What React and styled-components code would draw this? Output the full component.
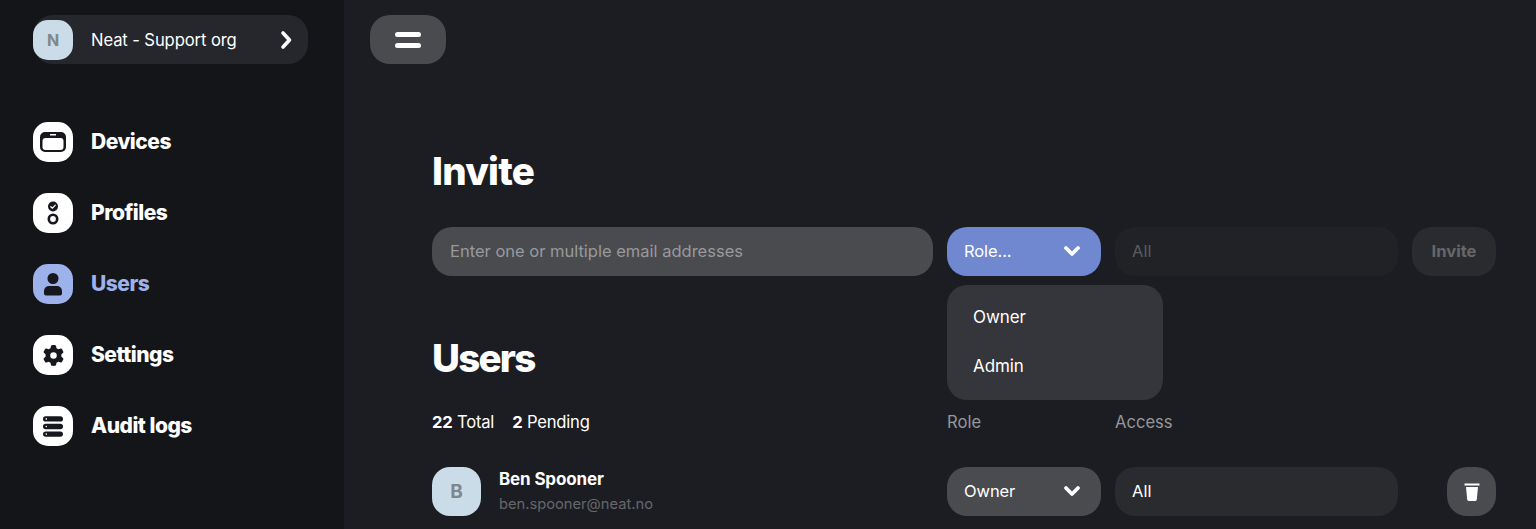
import React from 'react'
import styled, { createGlobalStyle } from 'styled-components'
import { FaGear } from 'react-icons/fa6'

const GlobalStyle = createGlobalStyle`
	html, body {
		margin: 0;
		height: 100%;
		overflow: hidden;
		background: #1c1d22;
		font-family: Inter, "Liberation Sans", sans-serif;
		color: #fff;
	}
	* { box-sizing: border-box; }
`

const Page = styled.div`
	display: flex;
	height: 529px;
	overflow: hidden;
`

const Sidebar = styled.aside`
	width: 344px;
	flex-shrink: 0;
	background: #141519;
	padding: 15px 36px 0 33px;
`

const OrgPill = styled.div`
	display: flex;
	align-items: center;
	width: 275px;
	height: 49px;
	border-radius: 20px;
	background: #26272c;
`

const OrgName = styled.span`
	flex: 1;
	margin-left: 18px;
	font-size: 16.6px;
	letter-spacing: -0.1px;
`

const Avatar = styled.div`
	display: flex;
	align-items: center;
	justify-content: center;
	flex-shrink: 0;
	width: ${p => p.$size}px;
	height: ${p => p.$size}px;
	border-radius: ${p => (p.$size > 40 ? 18 : 15)}px;
	background: #cadce8;
	color: #7f878c;
	font-weight: 700;
	font-size: ${p => (p.$size > 40 ? 19 : 16)}px;
`

const Chevron = styled.svg`
	flex-shrink: 0;
	margin-right: ${p => p.$right || 0}px;
`

const Nav = styled.nav`
	display: flex;
	flex-direction: column;
	gap: 31px;
	margin-top: 58px;
`

const NavItem = styled.a`
	display: flex;
	align-items: center;
	gap: 18px;
	height: 40px;
	font-size: 21px;
	font-weight: 800;
	line-height: 38px;
	letter-spacing: -0.5px;
	color: ${p => (p.$active ? '#9db1ea' : '#fff')};
`

const NavIcon = styled.span`
	display: flex;
	align-items: center;
	justify-content: center;
	width: 40px;
	height: 40px;
	border-radius: 15px;
	background: ${p => (p.$active ? '#9db1ea' : '#fff')};
	color: #17181d;
`

const Main = styled.main`
	flex: 1;
	min-width: 0;
	padding: 15px 40px 0 26px;
`

const MenuButton = styled.button`
	display: flex;
	align-items: center;
	justify-content: center;
	width: 76px;
	height: 49px;
	padding: 0;
	border: 0;
	border-radius: 20px;
	background: #4a4b4f;
`

const Content = styled.div`
	margin-left: 62px;
`

const Title = styled.h1`
	margin: 0;
	font-size: 38.5px;
	line-height: 48px;
	font-weight: 800;
`

const InviteTitle = styled(Title)`
	margin-top: 83px;
	letter-spacing: -0.8px;
`

const UsersTitle = styled(Title)`
	margin-top: 58px;
	letter-spacing: -1.8px;
`

const Row = styled.div`
	display: flex;
	align-items: center;
	gap: 14px;
`

const InviteRow = styled(Row)`
	position: relative;
	margin-top: 32px;
`

const EmailInput = styled.div`
	display: flex;
	align-items: center;
	width: 501px;
	height: 49px;
	padding: 0 18px 2px;
	border-radius: 20px;
	background: #4a4b4f;
	color: #98999c;
	font-size: 16.5px;
`

const Select = styled.div`
	display: flex;
	align-items: center;
	justify-content: space-between;
	width: 154px;
	height: 49px;
	padding: 0 20px 2px 17px;
	border-radius: 20px;
	background: ${p => (p.$open ? '#6f88cf' : '#4a4b4f')};
	font-size: 16.5px;
	letter-spacing: -0.1px;
`

const Access = styled.div`
	display: flex;
	align-items: center;
	width: 283px;
	height: 49px;
	padding: 0 17px 2px;
	border-radius: 20px;
	background: ${p => (p.$disabled ? '#212226' : '#2a2b2f')};
	color: ${p => (p.$disabled ? '#5b5c60' : '#fff')};
	font-size: 16.5px;
`

const InviteButton = styled.button`
	width: 84px;
	height: 49px;
	padding: 0 0 2px;
	border: 0;
	border-radius: 20px;
	background: #2a2b2f;
	color: #66676b;
	font: 700 16.6px Inter, "Liberation Sans", sans-serif;
`

const Menu = styled.div`
	position: absolute;
	z-index: 2;
	top: 58px;
	left: 515px;
	width: 216px;
	height: 115px;
	padding: 8px 0 0 26px;
	border-radius: 20px;
	background: #35363b;
	font-size: 17px;
`

const MenuItem = styled.div`
	height: 49px;
	line-height: 49px;
	letter-spacing: -0.1px;
`

const Stats = styled.div`
	display: flex;
	align-items: center;
	margin-top: 29px;
	height: 22px;
	font-size: 16.6px;
`

const Summary = styled.div`
	display: flex;
	gap: 18px;
	width: 515px;
`

const Stat = styled.span`
	letter-spacing: -0.2px;
	b { font-weight: 700; }
`

const ColumnLabel = styled.span`
	width: ${p => p.$width}px;
	color: #96979a;
`

const UserRow = styled(Row)`
	margin-top: 34px;
`

const UserCell = styled.div`
	display: flex;
	align-items: center;
	gap: 18px;
	width: 501px;
`

const UserText = styled.div`
	margin-bottom: 2px;
`

const UserName = styled.div`
	font-size: 17px;
	line-height: 22px;
	font-weight: 700;
	letter-spacing: -0.15px;
`

const UserEmail = styled.div`
	margin-top: 4px;
	font-size: 14.7px;
	line-height: 20px;
	color: #66676b;
`

const DeleteButton = styled.button`
	display: flex;
	align-items: center;
	justify-content: center;
	width: 49px;
	height: 49px;
	margin-left: auto;
	padding: 0;
	border: 0;
	border-radius: 20px;
	background: #4a4b4f;
`

const ChevronDown = () => (
	<Chevron width="18" height="12" viewBox="0 0 18 12" fill="none">
		<path d="M3 3l6 6 6-6" stroke="#fff" strokeWidth="3.8" strokeLinecap="round" strokeLinejoin="round" />
	</Chevron>
)

const DeviceIcon = () => (
	<svg width="26" height="20" viewBox="0 0 26 20" fill="currentColor">
		<path fillRule="evenodd" d="M5 0h16a5 5 0 0 1 5 5v10a5 5 0 0 1-5 5H5a5 5 0 0 1-5-5V5a5 5 0 0 1 5-5zm5 2v1.6h6V2zM5.5 6A3 3 0 0 0 2.5 9v6a3 3 0 0 0 3 3h15a3 3 0 0 0 3-3V9a3 3 0 0 0-3-3z" />
	</svg>
)

const ProfileIcon = () => (
	<svg width="14" height="24" viewBox="0 0 14 24" fill="none">
		<circle cx="7" cy="5.5" r="5" fill="currentColor" />
		<path d="M4.8 5.7l1.6 1.5 2.9-3" stroke="#fff" strokeWidth="1.2" fill="none" strokeLinecap="round" />
		<circle cx="7" cy="18" r="4.2" stroke="currentColor" strokeWidth="2.6" />
	</svg>
)

const UserIcon = () => (
	<svg width="20" height="24" viewBox="0 0 20 24" fill="currentColor">
		<circle cx="10" cy="6.5" r="5.5" />
		<path d="M6 14h8a5 5 0 0 1 5 5v2.5a2 2 0 0 1-2 2H3a2 2 0 0 1-2-2V19a5 5 0 0 1 5-5z" />
	</svg>
)

const LogBar = ({ y }) => (
	<path fillRule="evenodd" d={`M2.7 ${y}h14.6a2.7 2.7 0 0 1 0 5.4H2.7a2.7 2.7 0 0 1 0-5.4zm.6 1.9a.8.8 0 1 0 0 1.6.8.8 0 0 0 0-1.6z`} />
)

const LogsIcon = () => (
	<svg width="20" height="21" viewBox="0 0 20 21" fill="currentColor">
		<LogBar y={0.2} />
		<LogBar y={7.8} />
		<LogBar y={15.4} />
	</svg>
)

const TrashIcon = () => (
	<svg width="16" height="18" viewBox="0 0 16 18" fill="#fff">
		<rect x="0.5" y="0.5" width="15" height="2" />
		<path d="M2 4h12l-1.2 12.5a1.5 1.5 0 0 1-1.5 1.4H4.7a1.5 1.5 0 0 1-1.5-1.4z" />
	</svg>
)

const links = [
	{ label: 'Devices', icon: <DeviceIcon /> },
	{ label: 'Profiles', icon: <ProfileIcon /> },
	{ label: 'Users', icon: <UserIcon />, active: true },
	{ label: 'Settings', icon: <FaGear size={21} /> },
	{ label: 'Audit logs', icon: <LogsIcon /> },
]

const App = () => (
	<Page>
		<GlobalStyle />
		<Sidebar>
			<OrgPill>
				<Avatar $size={40}>N</Avatar>
				<OrgName>Neat - Support org</OrgName>
				<Chevron $right={15} width="14" height="20" viewBox="0 0 14 20" fill="none">
					<path d="M4 3l6.5 7L4 17" stroke="#fff" strokeWidth="3.6" strokeLinecap="round" strokeLinejoin="round" />
				</Chevron>
			</OrgPill>
			<Nav>
				{links.map(link => (
					<NavItem key={link.label} $active={link.active}>
						<NavIcon $active={link.active}>{link.icon}</NavIcon>
						{link.label}
					</NavItem>
				))}
			</Nav>
		</Sidebar>
		<Main>
			<MenuButton aria-label="Menu">
				<svg width="28" height="18" viewBox="0 0 28 18" fill="#fff">
					<rect x="1" y="1" width="26" height="5" rx="2.5" />
					<rect x="1" y="12" width="26" height="5" rx="2.5" />
				</svg>
			</MenuButton>
			<Content>
				<InviteTitle>Invite</InviteTitle>
				<InviteRow>
					<EmailInput>Enter one or multiple email addresses</EmailInput>
					<Select $open>Role...<ChevronDown /></Select>
					<Access $disabled>All</Access>
					<InviteButton>Invite</InviteButton>
					<Menu>
						<MenuItem>Owner</MenuItem>
						<MenuItem>Admin</MenuItem>
					</Menu>
				</InviteRow>
				<UsersTitle>Users</UsersTitle>
				<Stats>
					<Summary>
						<Stat><b>22</b> Total</Stat>
						<Stat><b>2</b> Pending</Stat>
					</Summary>
					<ColumnLabel $width={168}>Role</ColumnLabel>
					<ColumnLabel $width={284}>Access</ColumnLabel>
				</Stats>
				<UserRow>
					<UserCell>
						<Avatar $size={49}>B</Avatar>
						<UserText>
							<UserName>Ben Spooner</UserName>
							<UserEmail>ben.spooner@neat.no</UserEmail>
						</UserText>
					</UserCell>
					<Select>Owner<ChevronDown /></Select>
					<Access>All</Access>
					<DeleteButton aria-label="Delete"><TrashIcon /></DeleteButton>
				</UserRow>
			</Content>
		</Main>
	</Page>
)

export default App
